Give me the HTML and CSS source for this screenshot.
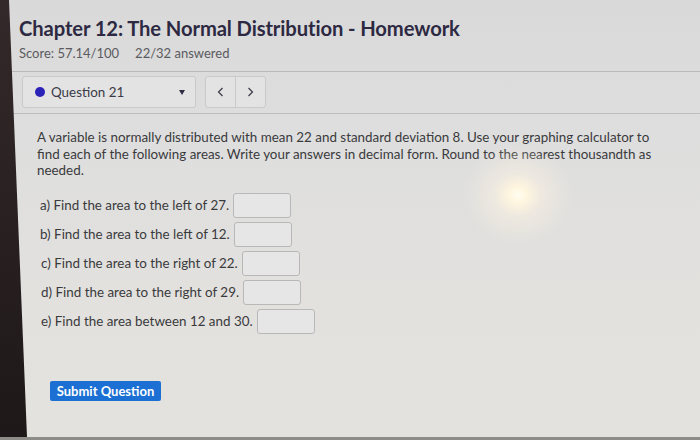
FILE: index.html
```html
<!DOCTYPE html>
<html lang="en">
<head>
<meta charset="utf-8">
<title>Chapter 12: The Normal Distribution - Homework</title>
<link rel="stylesheet" href="styles.css">
</head>
<body>
<div class="screen">
  <div class="glare"></div>
  <header class="head">
    <h1 class="title">Chapter 12: The Normal Distribution - Homework</h1>
    <div class="score"><span>Score: 57.14/100</span><span>22/32 answered</span></div>
  </header>
  <nav class="navbar">
    <div class="qselect">
      <span class="dot"></span>
      <span class="qlabel">Question 21</span>
      <span class="caret"></span>
    </div>
    <div class="pager">
      <span class="pbtn"><svg width="7" height="10" viewBox="0 0 7 10"><path d="M5.5 1 L1.5 5 L5.5 9" fill="none" stroke="#3a3a48" stroke-width="1.2"/></svg></span>
      <span class="pbtn"><svg width="7" height="10" viewBox="0 0 7 10"><path d="M1.5 1 L5.5 5 L1.5 9" fill="none" stroke="#3a3a48" stroke-width="1.2"/></svg></span>
    </div>
  </nav>
  <main class="question">
    <p class="prompt">A variable is normally distributed with mean 22 and standard deviation 8. Use your graphing calculator to find each of the following areas. Write your answers in decimal form. Round to the nearest thousandth as needed.</p>
    <div class="items">
      <div class="item"><span>a) Find the area to the left of 27.</span><span class="box"></span></div>
      <div class="item"><span>b) Find the area to the left of 12.</span><span class="box"></span></div>
      <div class="item shift1"><span>c) Find the area to the right of 22.</span><span class="box"></span></div>
      <div class="item shift1"><span>d) Find the area to the right of 29.</span><span class="box"></span></div>
      <div class="item shift1"><span>e) Find the area between 12 and 30.</span><span class="box"></span></div>
    </div>
    <button class="submit" type="button">Submit Question</button>
  </main>
</div>
</body>
</html>
```
FILE: styles.css
```css
html, body {
  margin: 0;
  padding: 0;
}
body {
  width: 700px;
  height: 440px;
  overflow: hidden;
  font-family: Lato, "Open Sans", sans-serif;
  color: #3a3a3c;
}
.screen {
  position: relative;
  width: 700px;
  height: 440px;
  box-sizing: border-box;
  padding-left: 19px;
  border-bottom: 3px solid #8d8c88;
  background:
    linear-gradient(180deg, #d9d9d9 0%, #dedede 30%, #e2e1de 70%, #e4e2de 100%);
  overflow: hidden;
}
.screen::before {
  content: "";
  position: absolute;
  left: 0;
  top: 0;
  width: 30px;
  height: 100%;
  background: linear-gradient(180deg, #34292a, #1e1818);
  clip-path: polygon(0 0, 9px 0, 27px 100%, 0 100%);
  z-index: 2;
}
.glare {
  position: absolute;
  left: 463px;
  top: 145px;
  width: 110px;
  height: 100px;
  background: radial-gradient(closest-side, #fffdf2 0%, #fff6df 15%, rgba(250, 240, 225, 0.55) 42%, rgba(240, 235, 228, 0) 100%);
  pointer-events: none;
}
.head {
  padding-top: 15px;
}
.title {
  margin: 0;
  font-size: 20.2px;
  line-height: 26px;
  font-weight: 700;
  color: #2d2942;
  letter-spacing: -0.1px;
}
.score {
  display: flex;
  gap: 16px;
  font-size: 13px;
  line-height: 18px;
  margin-top: 3px;
  color: #5a5a60;
}
.navbar {
  margin-top: 9px;
  margin-left: -7px;
  padding: 4px 0 5px 10px;
  border-top: 1px solid #b9b9b9;
  border-bottom: 1px solid #bdbdbd;
  display: flex;
  gap: 9px;
}
.qselect {
  width: 174px;
  height: 32px;
  box-sizing: border-box;
  border: 1px solid #c9c9c9;
  border-radius: 3px;
  background: #e3e3e3;
  display: flex;
  align-items: center;
  padding: 0 10px 0 12px;
  font-size: 13.4px;
  color: #3a3a48;
}
.dot {
  width: 10px;
  height: 10px;
  border-radius: 50%;
  background: #2b23b8;
  margin-right: 6px;
}
.qlabel {
  flex: 1;
}
.caret {
  width: 0;
  height: 0;
  border-left: 3px solid transparent;
  border-right: 3px solid transparent;
  border-top: 5px solid #2f2a44;
}
.pager {
  display: flex;
  height: 32px;
  box-sizing: border-box;
  border: 1px solid #c9c9c9;
  border-radius: 3px;
  background: #e3e3e3;
}
.pbtn {
  width: 29px;
  display: flex;
  align-items: center;
  justify-content: center;
}
.pbtn + .pbtn {
  border-left: 1px solid #c9c9c9;
}
.question {
  padding-left: 18px;
}
.prompt {
  margin: 15px 0 0;
  width: 615px;
  font-size: 13.4px;
  line-height: 16.5px;
}
.items {
  margin-top: 12px;
  display: flex;
  flex-direction: column;
  padding-left: 3px;
}
.item {
  height: 29px;
  display: flex;
  align-items: center;
  gap: 4px;
  font-size: 13.4px;
}
.shift1 {
  padding-left: 1px;
}
.box {
  width: 58px;
  height: 25px;
  box-sizing: border-box;
  border: 1px solid #b8b8b8;
  border-radius: 3px;
  background: #e6e6e6;
}
.submit {
  margin-top: 45px;
  margin-left: 13px;
  width: 111px;
  height: 20px;
  padding: 0;
  border: 0;
  border-radius: 2px;
  background: #1c6fd3;
  color: #ffffff;
  font-family: Lato, "Open Sans", sans-serif;
  font-size: 13px;
  font-weight: 700;
}
```
